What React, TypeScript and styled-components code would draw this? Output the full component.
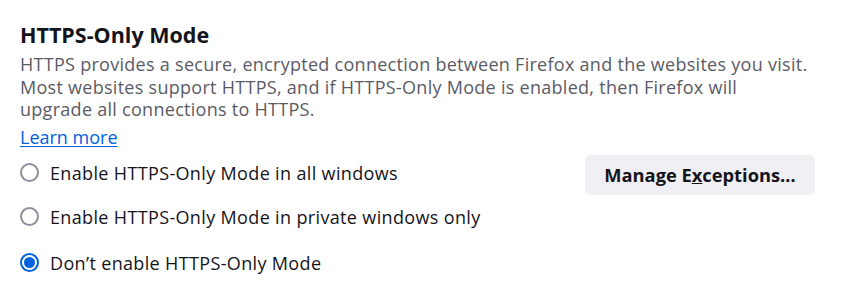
import styled, { createGlobalStyle } from "styled-components";

const GlobalStyle = createGlobalStyle`
  body {
    margin: 0;
    background: #ffffff;
    font-family: "Open Sans", "Noto Sans", sans-serif;
    color: #15141a;
  }
`;

const options = [
  { label: "Enable HTTPS-Only Mode in all windows", checked: false },
  { label: "Enable HTTPS-Only Mode in private windows only", checked: false },
  { label: "Don’t enable HTTPS-Only Mode", checked: true },
];

const Section = styled.section`
  width: 861px;
  height: 295px;
  box-sizing: border-box;
  padding: 21px 46px 0 20px;
`;

const Title = styled.h2`
  margin: 0;
  font-size: 21.5px;
  line-height: 28px;
  font-weight: 700;
`;

const Description = styled.p`
  margin: 4px 0 0;
  font-size: 18px;
  letter-spacing: 0.28px;
  line-height: 22.5px;
  color: #5b5b66;
`;

const LearnMore = styled.a`
  display: inline-block;
  margin-top: 4px;
  font-size: 18px;
  letter-spacing: 0;
  line-height: 24px;
  color: #0061e0;
  text-decoration: underline;
  text-underline-offset: 2px;
  cursor: pointer;
`;

const Options = styled.div`
  display: flex;
  flex-direction: column;
  margin-top: 4px;
`;

const Row = styled.div<{ $gap: number }>`
  display: flex;
  align-items: flex-start;
  justify-content: space-between;
  margin-top: ${(p) => p.$gap}px;
  min-height: 24px;
`;

const RadioLabel = styled.label<{ $offset: number }>`
  display: flex;
  align-items: center;
  gap: 11px;
  margin-top: ${(p) => p.$offset}px;
  font-size: 18px;
  letter-spacing: 0.35px;
  line-height: 24px;
  cursor: pointer;
`;

const Radio = styled.span<{ $checked: boolean }>`
  width: 19px;
  height: 19px;
  flex: none;
  box-sizing: border-box;
  border-radius: 50%;
  border: ${(p) => (p.$checked ? "2px solid #0061e0" : "2px solid #8f8f9d")};
  display: flex;
  align-items: center;
  justify-content: center;

  &::after {
    content: "";
    width: 11px;
    height: 11px;
    border-radius: 50%;
    background: ${(p) => (p.$checked ? "#0061e0" : "transparent")};
  }
`;

const Button = styled.button`
  width: 230px;
  height: 40px;
  margin-top: 2px;
  border: none;
  border-radius: 5px;
  background: #f0f0f4;
  color: #15141a;
  font-family: inherit;
  font-size: 18.3px;
  font-weight: 700;
  cursor: pointer;
`;

const AccessKey = styled.span`
  text-decoration: underline;
`;

export default function App() {
  return (
    <>
      <GlobalStyle />
      <Section>
        <Title>HTTPS-Only Mode</Title>
        <Description>
          HTTPS provides a secure, encrypted connection between Firefox and the websites you visit.
          <br />
          Most websites support HTTPS, and if HTTPS-Only Mode is enabled, then Firefox will
          <br />
          upgrade all connections to HTTPS.
          <br />
          <LearnMore>Learn more</LearnMore>
        </Description>
        <Options>
          {options.map((opt, i) => (
            <Row key={opt.label} $gap={i === 0 ? 0 : i === 1 ? 10 : 22}>
              <RadioLabel $offset={i === 0 ? 8 : 0}>
                <Radio $checked={opt.checked} />
                {opt.label}
              </RadioLabel>
              {i === 0 && (
                <Button>
                  Manage E<AccessKey>x</AccessKey>ceptions…
                </Button>
              )}
            </Row>
          ))}
        </Options>
      </Section>
    </>
  );
}
